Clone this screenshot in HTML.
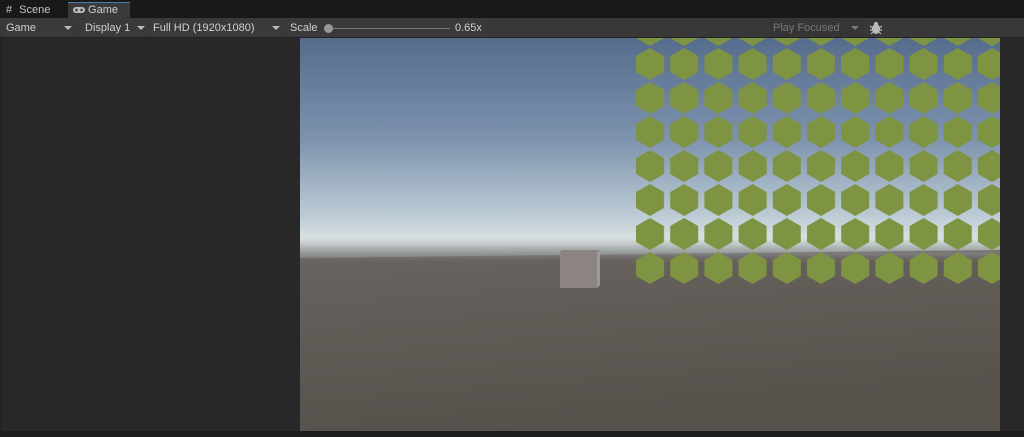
<!DOCTYPE html>
<html><head><meta charset="utf-8"><style>
*{margin:0;padding:0;box-sizing:border-box}
body{width:1024px;height:437px;background:#282828;font-family:"Liberation Sans",sans-serif;font-size:11px;color:#c4c4c4;position:relative;overflow:hidden}
.abs{position:absolute}
.tabbar{left:0;top:0;width:1024px;height:18px;background:#191919}
.tab{top:3px;height:15px;line-height:15px;padding-left:6px}
.toolbar{left:0;top:18px;width:1024px;height:20px;background:#383838;border-bottom:1px solid #232323}
.dd{top:19px;height:18px;line-height:18px;background:#3a3a3a;padding-left:4px;color:#d0d0d0}
.arrow{position:absolute;right:4px;top:7px;width:0;height:0;border-left:4px solid transparent;border-right:4px solid transparent;border-top:4px solid #bbb}
</style></head><body>
<div class="abs tabbar"></div>
<div class="abs tab" style="left:0;width:66px;background:#191919;color:#c4c4c4">
<span style="font-size:11px;margin-right:4px">#</span> Scene</div>
<div class="abs tab" style="left:68px;width:62px;background:#3a3a3a;border-top:1px solid #4a7bb5;top:2px;height:16px;color:#d0d0d0;padding-left:5px">
<svg width="12" height="8" style="vertical-align:-1px"><rect x="0" y="1" width="12" height="6" rx="3" fill="#bbb"/><circle cx="3.5" cy="4" r="1.3" fill="#3a3a3a"/><circle cx="8.5" cy="4" r="1.3" fill="#3a3a3a"/></svg> Game</div>
<div class="abs toolbar"></div>
<div class="abs dd" style="left:2px;width:74px">Game<span class="arrow"></span></div>
<div class="abs dd" style="left:79px;width:70px;padding-left:6px">Display 1<span class="arrow"></span></div>
<div class="abs dd" style="left:150px;width:134px;padding-left:3px">Full HD (1920x1080)<span class="arrow"></span></div>
<div class="abs dd" style="left:286px;width:200px;padding-left:4px">Scale</div>
<div class="abs" style="left:328px;top:28px;width:122px;height:1px;background:#777"></div>
<div class="abs" style="left:324px;top:24px;width:9px;height:9px;border-radius:50%;background:#999"></div>
<div class="abs" style="left:455px;top:19px;line-height:18px;color:#d0d0d0">0.65x</div>
<div class="abs dd" style="left:770px;width:93px;color:#777;background:#353535;padding-left:3px">Play Focused<span class="arrow" style="border-top-color:#777"></span></div>
<div class="abs dd" style="left:865px;width:20px;background:#383838">
<svg width="14" height="14" style="margin-top:2px"><ellipse cx="7" cy="8" rx="4" ry="5" fill="#bbb"/><circle cx="7" cy="3" r="2" fill="#bbb"/><path d="M1 5l3 2M13 5l-3 2M1 9h3M13 9h-3M2 13l2-2M12 13l-2-2" stroke="#bbb" stroke-width="1.2"/></svg></div>
<div class="abs" style="left:0;top:38px;width:300px;height:393px;background:#282828;border-left:2px solid #222"></div>
<div class="abs" style="left:1000px;top:38px;width:24px;height:393px;background:#282828"></div>
<div class="abs" style="left:0;top:431px;width:1024px;height:6px;background:#1d1d1d"></div>
<svg class="abs" style="left:300px;top:38px" width="700" height="393" viewBox="300 38 700 393">
<defs>
<linearGradient id="sky" x1="0" y1="0" x2="0" y2="1">
<stop offset="0" stop-color="#556c8c"/>
<stop offset="0.45" stop-color="#7c92ad"/>
<stop offset="0.8" stop-color="#bccbd5"/>
<stop offset="0.9" stop-color="#d8e0e0"/>
<stop offset="0.96" stop-color="#a9aeaf"/>
<stop offset="1" stop-color="#7a7673"/>
</linearGradient>
<linearGradient id="gr" x1="0" y1="0" x2="0.3" y2="1">
<stop offset="0" stop-color="#6a6460"/>
<stop offset="1" stop-color="#57514c"/>
</linearGradient>
<linearGradient id="hz" x1="0" y1="0" x2="0" y2="1">
<stop offset="0" stop-color="#9aa0a2" stop-opacity="0"/>
<stop offset="0.5" stop-color="#8e8f8f" stop-opacity="0.6"/>
<stop offset="1" stop-color="#6a6460" stop-opacity="0"/>
</linearGradient>
<pattern id="hx" patternUnits="userSpaceOnUse" x="633" y="13" width="34.2" height="34">
<polygon points="17,1 31,9 31,25 17,33 3,25 3,9" fill="#7e9442"/>
</pattern>
</defs>
<rect x="300" y="38" width="700" height="222" fill="url(#sky)"/>
<polygon points="300,258 1000,250 1000,431 300,431" fill="url(#gr)"/>
<rect x="300" y="244" width="700" height="20" fill="url(#hz)"/>
<rect x="636" y="38" width="364" height="246" fill="url(#hx)"/>
<polygon points="560,252 562,250 600,250 600,285 597,288 560,288" fill="#8c8483"/>
<polygon points="597,252 600,250 600,285 597,288" fill="#9c98a0"/>
</svg>
</body></html>
